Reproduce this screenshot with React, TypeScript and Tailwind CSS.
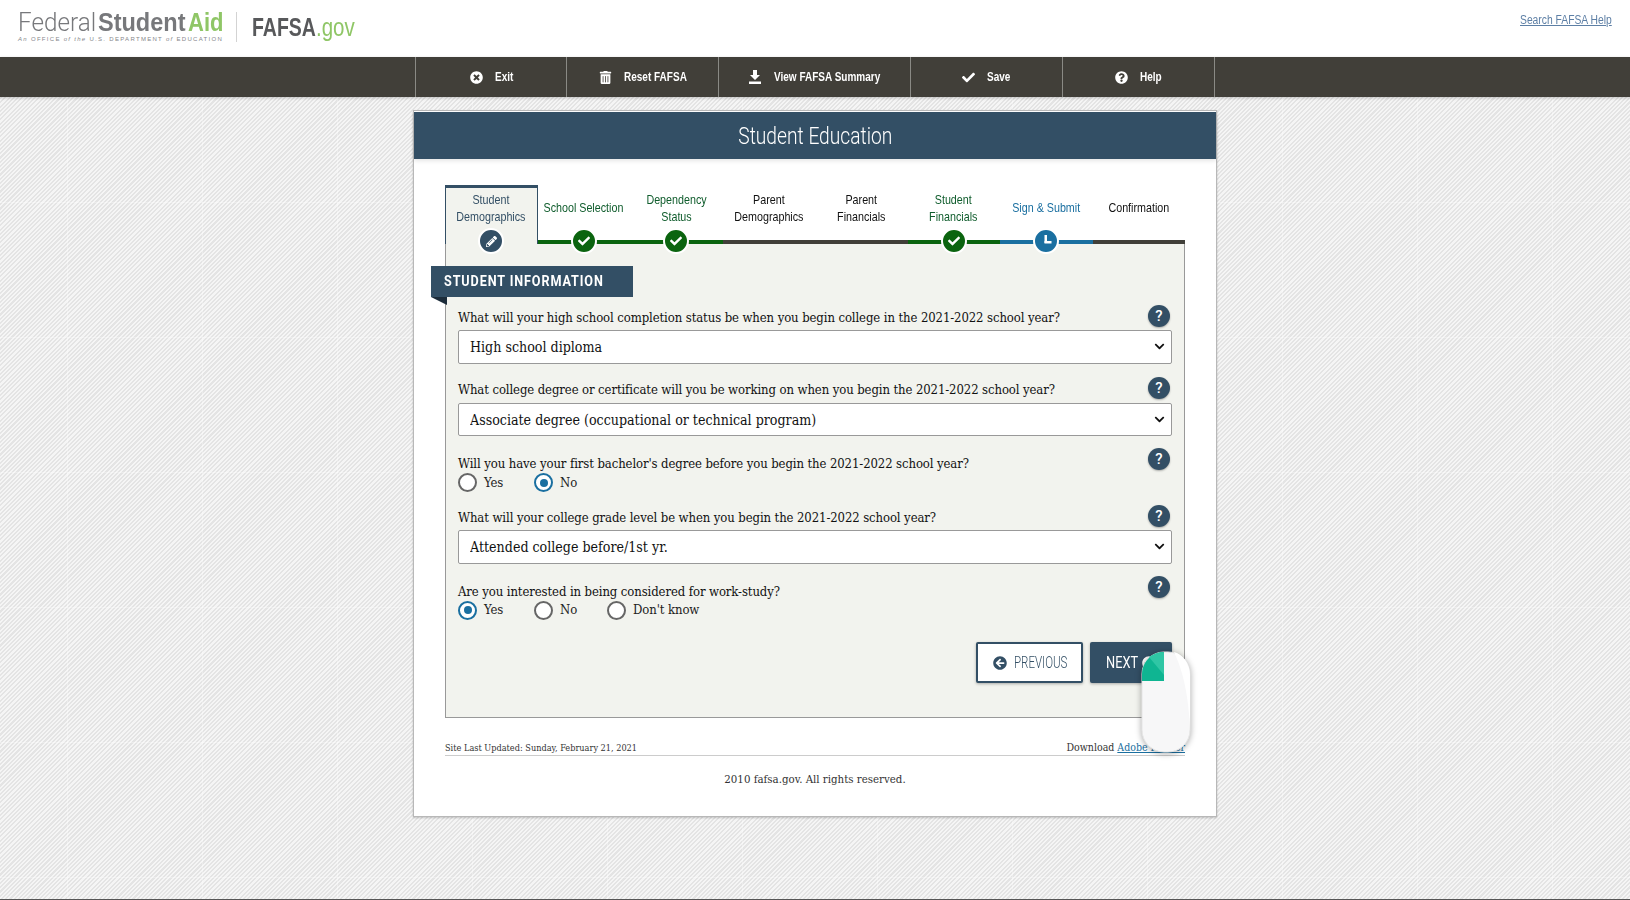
import React from "react";
import { FaCheck, FaPencilAlt, FaChevronDown, FaArrowCircleLeft, FaArrowCircleRight, FaTimesCircle, FaTrashAlt, FaQuestionCircle } from "react-icons/fa";

const serif = "font-['DejaVu_Serif_Condensed','DejaVu_Serif',serif]";
const squeeze = "inline-block origin-left whitespace-nowrap";

function DownloadIcon() {
  return (
    <svg width="14" height="14" viewBox="0 0 14 14" fill="white">
      <path d="M5 0h4v5h3L7 10 2 5h3z" />
      <rect x="1" y="11.5" width="12" height="2.5" />
    </svg>
  );
}

function Nav({ w, tw, icon, label }: { w: string; tw: string; icon: React.ReactNode; label: string }) {
  return (
    <div className={`${w} h-full flex items-center justify-center gap-[12px] border-r border-[#8a8a85] text-white`}>
      <span className="flex items-center justify-center">{icon}</span>
      <span className={`${squeeze} ${tw} scale-x-[0.77] font-['Liberation_Sans',sans-serif] font-bold text-[13px]`}>{label}</span>
    </div>
  );
}

type StepProps = { lines: string[]; state: "active" | "done" | "none" | "current" };

function Step({ lines, state }: StepProps) {
  const color =
    state === "active" ? "text-[#334f65]" : state === "done" ? "text-[#0f5c2c]" : state === "current" ? "text-[#1a6fa0]" : "text-[#111111]";
  const line =
    state === "active"
      ? "bg-[#f2f3ee] border-t-[3px] border-x border-t-[#334f65] border-x-[#334f65]"
      : state === "done"
      ? "border-b-4 border-b-[#0b640f]"
      : state === "current"
      ? "border-b-4 border-b-[#1a6fa0]"
      : "border-b-4 border-b-[#413f39]";
  const shift = state === "active" ? "" : lines.length === 1 ? "mt-[2px]" : "mt-[3px]";
  return (
    <div className={`relative h-full flex flex-col items-center ${line}`}>
      <div className={`h-[40px] flex flex-col justify-center text-center whitespace-nowrap scale-x-[0.825] text-[13px] leading-[17px] font-['Liberation_Sans',sans-serif] ${color} ${shift}`}>
        {lines.map((l) => (
          <div key={l}>{l}</div>
        ))}
      </div>
      {state === "active" && (
        <Badge bg="bg-[#334f65] top-[40px]">
          <FaPencilAlt size={11} color="white" />
        </Badge>
      )}
      {state === "done" && (
        <Badge bg="bg-[#0b640f] top-[43px]">
          <FaCheck size={12} color="white" />
        </Badge>
      )}
      {state === "current" && (
        <Badge bg="bg-[#1a6fa0] top-[43px]">
          <svg width="14" height="14" viewBox="0 0 14 14" fill="white">
            <rect x="5.5" y="1" width="2.5" height="8" />
            <rect x="5.5" y="7" width="7" height="2.5" />
          </svg>
        </Badge>
      )}
    </div>
  );
}

function Badge({ bg, children }: { bg: string; children: React.ReactNode }) {
  return (
    <div className={`absolute left-1/2 -translate-x-1/2 w-[26px] h-[26px] rounded-full border-2 border-white flex items-center justify-center z-10 ${bg}`}>
      {children}
    </div>
  );
}

function Help() {
  return (
    <div className="w-[22px] h-[22px] rounded-full bg-[#334f65] shadow-[0_1px_2px_rgba(0,0,0,0.3)] text-white text-[15px] font-['Roboto',sans-serif] font-medium flex items-center justify-center shrink-0">
      ?
    </div>
  );
}

function Question({ text, h, pt, mt, children }: { text: string; h: string; pt: string; mt: string; children: React.ReactNode }) {
  return (
    <div className={mt}>
      <div className={`flex justify-between ${h}`}>
        <div className={`${pt} text-[13px] tracking-[-0.1px] leading-[16px] text-[#111111] ${serif}`}>{text}</div>
        <div className="pr-[2px]">
          <Help />
        </div>
      </div>
      {children}
    </div>
  );
}

function Sel({ value, h }: { value: string; h: string }) {
  return (
    <div className={`relative ${h}`}>
      <select
        defaultValue={value}
        className={`appearance-none w-full h-full bg-white border border-[#999999] rounded-[2px] pl-[11px] pt-[2px] text-[14.1px] text-[#111111] ${serif}`}
      >
        <option>{value}</option>
      </select>
      <FaChevronDown size={11} color="#111111" className="absolute right-[7px] top-[11px]" />
    </div>
  );
}

function Radio({ label, on, w }: { label: string; on?: boolean; w: string }) {
  return (
    <div className={`flex items-center gap-[7px] ${w}`}>
      <span className={`w-[19px] h-[19px] rounded-full bg-white border-[2.5px] flex items-center justify-center ${on ? "border-[#1a6fa0]" : "border-[#666666]"}`}>
        {on && <span className="w-[8px] h-[8px] rounded-full bg-[#1a6fa0]" />}
      </span>
      <span className={`text-[13px] tracking-[-0.1px] text-[#222222] ${serif}`}>{label}</span>
    </div>
  );
}

export default function App() {
  return (
    <div className="h-[900px] flex flex-col overflow-hidden font-['Liberation_Sans',sans-serif] bg-[image:linear-gradient(90deg,rgba(255,255,255,0.3)_1px,transparent_1px),linear-gradient(rgba(255,255,255,0.3)_1px,transparent_1px),repeating-linear-gradient(135deg,#e4e4e4_0px,#e4e4e4_1.5px,#f5f5f5_1.5px,#f5f5f5_3px)] bg-size-[135px_135px,135px_135px,auto] bg-position-[67px_67px,67px_67px,0_0]">
      <header className="h-[57px] bg-white flex items-start pl-[18px] shrink-0">
        <div className="w-[205px] mt-[9px]">
          <div className="h-[26px] flex items-baseline text-[25px] leading-[26px] whitespace-nowrap">
            <span className={`${squeeze} w-[75px] mr-[5px] scale-x-[0.97] font-['Roboto',sans-serif] font-light text-[#77787b]`}>Federal</span>
            <span className={`${squeeze} w-[84px] mr-[6px] scale-x-[0.94] text-[#77787b] font-bold`}>Student</span>
            <span className={`${squeeze} w-[33px] scale-x-[0.88] text-[#8fc666] font-bold`}>Aid</span>
          </div>
          <div className="text-[6px] leading-[8px] mt-0 tracking-[1.3px] text-[#85868a] whitespace-nowrap">
            <i>An</i> OFFICE <i>of the</i> U.S. DEPARTMENT <i>of</i> EDUCATION
          </div>
        </div>
        <div className="w-px h-[30px] bg-[#d3d3d3] mt-[12px] ml-[13px]" />
        <div className="ml-[15px] mt-[13px] text-[25px] leading-[28px] whitespace-nowrap">
          <span className={`${squeeze} w-[64px] scale-x-[0.78] text-[#58595b] font-bold`}>FAFSA</span>
          <span className={`${squeeze} w-[39px] scale-x-[0.82] text-[#8fc666]`}>.gov</span>
        </div>
        <a className={`${squeeze} w-[92px] scale-x-[0.86] ml-auto mr-[18px] mt-[13px] text-[12px] leading-[15px] text-[#5d7fa5] underline font-['Liberation_Sans',sans-serif]`}>
          Search FAFSA Help
        </a>
      </header>

      <nav className="h-[40px] bg-[#413f39] flex justify-center shrink-0 shadow-[0_1px_3px_rgba(0,0,0,0.2)]">
        <div className="h-full w-[800px] flex border-l border-[#8a8a85]">
          <Nav w="w-[151px]" tw="w-[18px]" icon={<FaTimesCircle size={13} color="white" />} label="Exit" />
          <Nav w="w-[152px]" tw="w-[62px]" icon={<FaTrashAlt size={13} color="white" />} label="Reset FAFSA" />
          <Nav w="w-[192px]" tw="w-[108px]" icon={<DownloadIcon />} label="View FAFSA Summary" />
          <Nav w="w-[152px]" tw="w-[24px]" icon={<FaCheck size={13} color="white" />} label="Save" />
          <Nav w="w-[152px]" tw="w-[23px]" icon={<FaQuestionCircle size={13} color="white" />} label="Help" />
        </div>
      </nav>

      <main className="flex-1 flex justify-center pt-[13px]">
        <div className="w-[804px] h-[707px] bg-white border border-[#b8b8b8] shadow-[0_1px_2px_rgba(0,0,0,0.2)] pt-px">
          <div className="h-[47px] bg-[#334f65] text-white shadow-[0_2px_4px_rgba(0,0,0,0.1)] flex items-center justify-center">
            <span className="inline-block scale-x-[0.8] text-[24px] font-light font-['Roboto',sans-serif] whitespace-nowrap">Student Education</span>
          </div>
          <div className="px-[31px]">
            <div className="mt-[26px] h-[59px] grid grid-cols-8">
              <Step lines={["Student", "Demographics"]} state="active" />
              <Step lines={["School Selection"]} state="done" />
              <Step lines={["Dependency", "Status"]} state="done" />
              <Step lines={["Parent", "Demographics"]} state="none" />
              <Step lines={["Parent", "Financials"]} state="none" />
              <Step lines={["Student", "Financials"]} state="done" />
              <Step lines={["Sign & Submit"]} state="current" />
              <Step lines={["Confirmation"]} state="none" />
            </div>
            <div className="h-[474px] bg-[#f2f3ee] border-x border-b border-[#999999] px-[12px] pt-[22px]">
              <div className="relative -ml-[27px] w-[202px] h-[31px] bg-[#334f65] text-white text-[14px] font-bold tracking-[1px] flex items-center pl-[13px] font-['Roboto',sans-serif]">
                <span className={`${squeeze} scale-x-[0.9]`}>STUDENT INFORMATION</span>
                <svg className="absolute left-0 top-[31px]" width="16" height="8" viewBox="0 0 16 8">
                  <path d="M0 0h16v8z" fill="#1c2c3a" />
                </svg>
              </div>
              <div className="h-[8px]" />
              <Question text="What will your high school completion status be when you begin college in the 2021-2022 school year?" h="h-[25px]" pt="pt-[5px]" mt="mt-0">
                <Sel value="High school diploma" h="h-[34px]" />
              </Question>
              <Question text="What college degree or certificate will you be working on when you begin the 2021-2022 school year?" h="h-[26px]" pt="pt-[5px]" mt="mt-[13px]">
                <Sel value="Associate degree (occupational or technical program)" h="h-[33px]" />
              </Question>
              <Question text="Will you have your first bachelor's degree before you begin the 2021-2022 school year?" h="h-[25px]" pt="pt-[8px]" mt="mt-[12px]">
                <div className="flex h-[19px]">
                  <Radio label="Yes" w="w-[76px]" />
                  <Radio label="No" on w="w-[73px]" />
                </div>
              </Question>
              <Question text="What will your college grade level be when you begin the 2021-2022 school year?" h="h-[25px]" pt="pt-[5px]" mt="mt-[13px]">
                <Sel value="Attended college before/1st yr." h="h-[34px]" />
              </Question>
              <Question text="Are you interested in being considered for work-study?" h="h-[24px]" pt="pt-[8px]" mt="mt-[12px]">
                <div className="flex h-[20px] items-center">
                  <Radio label="Yes" on w="w-[76px]" />
                  <Radio label="No" w="w-[73px]" />
                  <Radio label="Don't know" w="w-[120px]" />
                </div>
              </Question>
              <div className="mt-[22px] flex justify-end gap-[7px]">
                <button className="w-[107px] h-[41px] bg-white border-[2px] border-[#334f65] rounded-[2px] shadow-[0_1px_3px_rgba(0,0,0,0.3)] flex items-center pl-[15px] pt-px gap-[7px] text-[#334f65] text-[16px] font-light font-['Roboto',sans-serif]">
                  <FaArrowCircleLeft size={14} color="#334f65" className="shrink-0" />
                  <span className={`${squeeze} w-[55px] scale-x-[0.72]`}>PREVIOUS</span>
                </button>
                <div className="relative">
                  <button className="w-[82px] h-[41px] bg-[#334f65] rounded-[2px] shadow-[0_1px_3px_rgba(0,0,0,0.3)] flex items-center pl-[16px] pt-px gap-[7px] text-white text-[16px] font-['Roboto',sans-serif]">
                    <span className={`${squeeze} w-[29px] scale-x-[0.8]`}>NEXT</span>
                    <FaArrowCircleRight size={14} color="white" className="shrink-0" />
                  </button>
                  <svg className="absolute left-[51px] top-[9px] drop-shadow-[0_1px_3px_rgba(0,0,0,0.35)]" width="50" height="102" viewBox="0 0 50 102">
                    <rect x="1" y="1" width="48" height="100" rx="22" fill="#f7f7f8" stroke="#e6e6e6" strokeWidth="1" />
                    <path d="M33 1C42 20 48 45 49 80V24C49 12 41 3 33 1Z" fill="#ffffff" />
                    <path d="M1 30V23C1 11 11 1 23 1V30Z" fill="#0fb592" />
                    <path d="M8 6C12 3 18 1 23 1V24Z" fill="#2fc6a5" />
                  </svg>
                </div>
              </div>
            </div>
            <div className={`mt-[24px] h-[12px] flex justify-between items-end text-[9.1px] leading-[12px] text-[#333333] ${serif}`}>
              <span>Site Last Updated: Sunday, February 21, 2021</span>
              <span className="text-[10.5px] mb-px">
                Download <a className="text-[#1a6fa0] underline">Adobe Reader</a>
              </span>
            </div>
            <div className="border-b border-[#cccccc] mt-[1px]" />
            <div className={`mt-[16px] text-center text-[11.4px] leading-[14px] text-[#333333] ${serif}`}>2010 fafsa.gov. All rights reserved.</div>
          </div>
        </div>
      </main>
      <div className="h-px bg-[#555555] shrink-0" />
    </div>
  );
}
